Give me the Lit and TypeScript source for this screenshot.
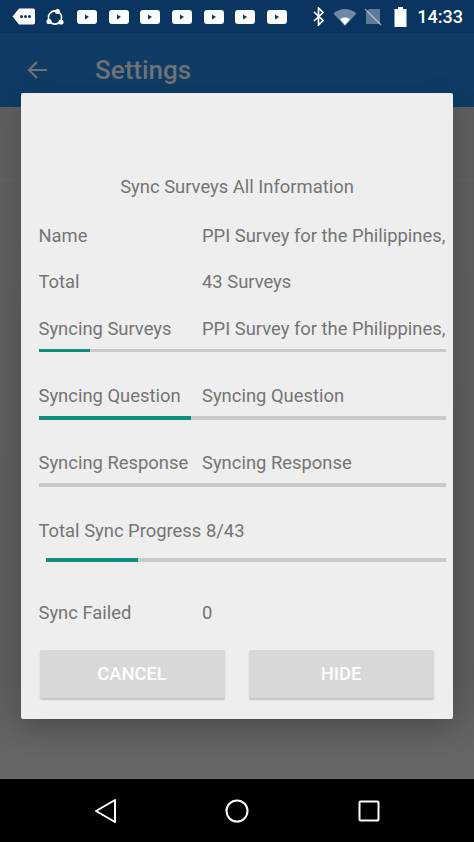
import { LitElement, html, css, svg } from "lit";
import { customElement } from "lit/decorators.js";

const play = svg`<rect x="0" y="0" width="20" height="14" rx="3" fill="#fff"/><path d="M8 4.5v5l4-2.5z" fill="#0a3560"/>`;

@customElement("app-root")
export class AppRoot extends LitElement {
  static styles = css`
    :host { display: block; width: 474px; height: 842px; overflow: hidden; position: relative; font-family: Roboto, "Noto Sans", sans-serif; background: #696969; }
    .screen { display: flex; flex-direction: column; height: 842px; }
    .status { height: 33px; background: #0a3560; display: flex; align-items: center; flex: none; color: #fff; position: relative; }
    .status svg { display: block; flex: none; }
    .st-left { margin-left: 12px; display: flex; align-items: center; }
    .plays { display: flex; gap: 11.65px; margin-left: 13px; }
    .st-right { margin-left: auto; display: flex; align-items: center; margin-right: 11px; }
    .time { font-size: 18px; font-weight: 500; margin-left: 10px; }
    .appbar { height: 74px; background: #0e3c64; flex: none; display: flex; align-items: center; padding-left: 27px; }
    .title { font-size: 26px; font-weight: 500; color: #6e7175; margin-left: 48px; }
    .body { flex: 1; background: linear-gradient(#5f5f5f, #5d5d5d 85%, #686868); }
    .divider { height: 1px; margin-top: 73px; background: #636363; }
    .nav { height: 63px; background: #000; flex: none; display: flex; align-items: center; }
    .nav svg { display: block; }
    .navin { display: grid; grid-template-columns: 26px 26px 26px; justify-content: space-between; width: 290px; margin-left: 92px; justify-items: center; align-items: center; }
    .dialog { position: absolute; left: 21px; top: 93px; width: 432px; height: 626px; background: #eeeeee; border-radius: 2px; box-shadow: 0 10px 28px rgba(0,0,0,.22); box-sizing: border-box; padding: 0 7px 0 17.5px; color: #757575; font-size: 18.4px; display: flex; flex-direction: column; }
    .dialog > * { flex: none; }
    .head { text-align: center; margin: 83px 0 0 0; height: 21px; line-height: 21px; padding-right: 10.5px; }
    .row { display: grid; grid-template-columns: 163.5px 1fr; height: 21px; line-height: 21px; white-space: nowrap; }
    .row span { overflow: hidden; }
    .r1 { margin-top: 27.5px; }
    .r2 { margin-top: 25.5px; }
    .r3 { margin-top: 25.5px; }
    .r4 { margin-top: 33px; }
    .r5 { margin-top: 32.5px; }
    .bar { height: 3.5px; background: #c9c9c9; margin-top: 10px; }
    .fill { height: 100%; background: #0e8f7e; }
    .total { margin-top: 33px; height: 21px; line-height: 21px; }
    .bar2 { height: 3.5px; background: #c9c9c9; margin: 17.5px 0 0 7px; }
    .failed { margin-top: 40.5px; }
    .btns { display: flex; margin: 26.5px 0 0 1px; gap: 24px; width: 395px; }
    .btn { width: 185px; height: 48px; background: #d8d8d8; border-radius: 2px; box-shadow: 0 1.5px 1.5px rgba(0,0,0,.18); display: flex; align-items: center; justify-content: center; color: #fdfdfd; font-size: 18.4px; font-weight: 500; }
  `;

  render() {
    return html`
      <div class="screen">
        <div class="status">
          <div class="st-left">
            <svg width="23" height="17" viewBox="0 0 23 17"><path d="M7 0.5h14a2 2 0 0 1 2 2v12a2 2 0 0 1-2 2H7L0.5 8.5z" fill="#fff"/><circle cx="9.5" cy="8.5" r="1.5" fill="#0a3560"/><circle cx="13.5" cy="8.5" r="1.5" fill="#0a3560"/><circle cx="17.5" cy="8.5" r="1.5" fill="#0a3560"/></svg>
            <svg width="18" height="18" viewBox="0 0 18 18" style="margin-left:11px"><circle cx="9" cy="9.5" r="6.600" fill="none" stroke="#fff" stroke-width="1.600"/><circle cx="11.500" cy="3.500" r="2.500" fill="#fff"/><circle cx="3" cy="13.500" r="2.600" fill="#fff"/><circle cx="15" cy="14" r="2.600" fill="#fff"/></svg>
            <div class="plays">
              ${[0,1,2,3,4,5,6].map(() => html`<svg width="20" height="14" viewBox="0 0 20 14">${play}</svg>`)}
            </div>
          </div>
          <div class="st-right">
            <svg width="12" height="19" viewBox="0 0 12 19"><path d="M1 5l9 8.500-4.500 4.500V1L10 5.500 1 14" fill="none" stroke="#fff" stroke-width="1.700"/></svg>
            <svg width="24" height="18" viewBox="0 0 24 18" style="margin-left:8px"><path d="M0.500 5.500C7 -0.500 17-0.500 23.500 5.500L12 18z" fill="#fff" fill-opacity=".42"/><path d="M7 11.200c3-2.200 7-2.200 10 0L12 17z" fill="#fff"/></svg>
            <svg width="18" height="18" viewBox="0 0 18 18" style="margin-left:7px"><path d="M5 1h11v15H2V4.500z" fill="#fff" fill-opacity=".35"/><path d="M1 1l16 16" stroke="#fff" stroke-opacity=".55" stroke-width="1.200"/></svg>
            <svg width="13" height="20" viewBox="0 0 13 20" style="margin-left:12px"><path d="M4 0h5v2h3.500v18H.5V2H4z" fill="#fff"/></svg>
            <span class="time">14:33</span>
          </div>
        </div>
        <div class="appbar">
          <svg width="20" height="18" viewBox="0 0 20 18"><path d="M20 9H2M10 1L2 9l8 8" fill="none" stroke="#6e7175" stroke-width="2.200"/></svg>
          <span class="title">Settings</span>
        </div>
        <div class="body"><div class="divider"></div></div>
        <div class="nav">
          <div class="navin">
            <svg width="24" height="26" viewBox="0 0 24 26"><path d="M22 2L3 13l19 11z" fill="none" stroke="#fff" stroke-width="2" stroke-linejoin="round"/></svg>
            <svg width="24" height="24" viewBox="0 0 24 24"><circle cx="12" cy="12" r="10.500" fill="none" stroke="#fff" stroke-width="2"/></svg>
            <svg width="22" height="22" viewBox="0 0 22 22"><rect x="1.500" y="1.500" width="19" height="19" rx="1" fill="none" stroke="#fff" stroke-width="2"/></svg>
          </div>
        </div>
      </div>
      <div class="dialog">
        <div class="head">Sync Surveys All Information</div>
        <div class="row r1"><span>Name</span><span>PPI Survey for the Philippines,</span></div>
        <div class="row r2"><span>Total</span><span>43 Surveys</span></div>
        <div class="row r3"><span>Syncing Surveys</span><span>PPI Survey for the Philippines,</span></div>
        <div class="bar"><div class="fill" style="width:12.6%"></div></div>
        <div class="row r4"><span>Syncing Question</span><span>Syncing Question</span></div>
        <div class="bar"><div class="fill" style="width:37.4%"></div></div>
        <div class="row r5"><span>Syncing Response</span><span>Syncing Response</span></div>
        <div class="bar"></div>
        <div class="total">Total Sync Progress 8/43</div>
        <div class="bar2"><div class="fill" style="width:23.1%"></div></div>
        <div class="row failed"><span>Sync Failed</span><span>0</span></div>
        <div class="btns"><div class="btn">CANCEL</div><div class="btn">HIDE</div></div>
      </div>
    `;
  }
}
